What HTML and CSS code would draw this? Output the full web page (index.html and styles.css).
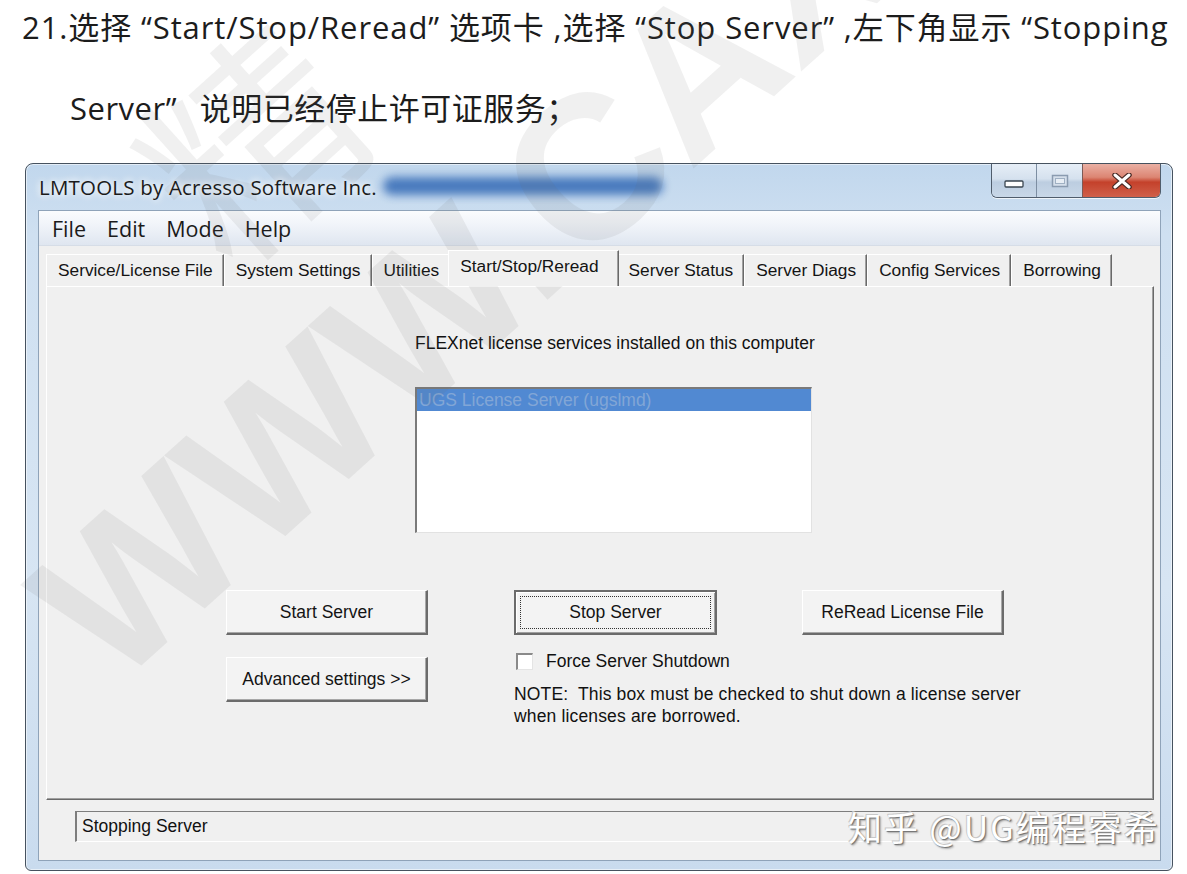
FILE: index.html
```html
<!DOCTYPE html>
<html lang="zh-CN">
<head>
<meta charset="utf-8">
<title>LMTOOLS</title>
<link rel="stylesheet" href="styles.css">
</head>
<body>
<div class="caption">
  <p class="line l1">21.选择 “Start/Stop/Reread” 选项卡 ,选择 “Stop Server” ,左下角显示 “Stopping</p>
  <p class="line l2">Server<span class="fwq">”</span>说明已经停止许可证服务；</p>
</div>

<div class="window">
  <div class="titlebar">
    <span class="title">LMTOOLS by Acresso Software Inc.</span>
    <span class="glass"></span>
    <div class="controls">
      <span class="ctl min">
        <svg width="20" height="8" viewBox="0 0 20 8"><rect x="1" y="1" width="18" height="6" rx="1" fill="#fff" stroke="#3a4550" stroke-width="1.3"/></svg>
      </span>
      <span class="ctl max">
        <svg width="18" height="14" viewBox="0 0 18 14"><rect x="1.5" y="1.5" width="15" height="11" fill="#d5dfeb" stroke="#8a9bb0" stroke-width="1.5"/><rect x="4.5" y="4.5" width="9" height="5" fill="#e8eef5" stroke="#9fb0c3" stroke-width="1"/></svg>
      </span>
      <span class="ctl close">
        <svg width="22" height="16" viewBox="0 0 22 16"><path d="M4 2 L18 14 M18 2 L4 14" stroke="#4a2a25" stroke-width="5.5" stroke-linecap="round"/><path d="M4 2 L18 14 M18 2 L4 14" stroke="#fff" stroke-width="3" stroke-linecap="round"/></svg>
      </span>
    </div>
  </div>

  <div class="client">
    <div class="menubar">
      <span class="menu">File</span>
      <span class="menu">Edit</span>
      <span class="menu">Mode</span>
      <span class="menu">Help</span>
    </div>

    <div class="tabs">
      <span class="tab">Service/License File</span>
      <span class="tab">System Settings</span>
      <span class="tab">Utilities</span>
      <span class="tab active">Start/Stop/Reread</span>
      <span class="tab">Server Status</span>
      <span class="tab">Server Diags</span>
      <span class="tab">Config Services</span>
      <span class="tab">Borrowing</span>
    </div>

    <div class="panel">
      <div class="services">
        <div class="heading">FLEXnet license services installed on this computer</div>
        <div class="listbox">
          <div class="item selected">UGS License Server (ugslmd)</div>
        </div>
      </div>

      <div class="actions">
        <button class="btn start">Start Server</button>
        <button class="btn stop default"><span class="focus">Stop Server</span></button>
        <button class="btn reread">ReRead License File</button>
        <button class="btn advanced">Advanced settings &gt;&gt;</button>
        <div class="stopopts">
          <label class="check"><span class="box"></span>Force Server Shutdown</label>
          <p class="note">NOTE:&nbsp; This box must be checked to shut down a license server<br>when licenses are borrowed.</p>
        </div>
      </div>
    </div>

    <div class="statusbar">
      <div class="statusfield">Stopping Server</div>
    </div>
  </div>
</div>

<div class="wm wm-main">WWW.CAX</div>
<div class="wm wm-char">精</div>
<div class="zhihu">知乎 @UG编程睿希</div>
</body>
</html>
```

FILE: styles.css
```css
html, body {
  margin: 0;
  padding: 0;
}

body {
  width: 1187px;
  height: 874px;
  background: #ffffff;
  position: relative;
  overflow: hidden;
  font-family: "Liberation Sans", Arial, sans-serif;
  color: #111;
}

/* ---------- caption text ---------- */
.caption {
  padding-top: 7px;
  font-family: "Open Sans", "Noto Sans CJK SC", sans-serif;
  font-size: 31px;
  color: #1c1c1c;
}

.line {
  margin: 0;
  line-height: 40px;
  white-space: nowrap;
}

.l1 {
  margin-left: 22px;
  letter-spacing: 0.9px;
}

.l2 {
  margin-top: 41px;
  margin-left: 70px;
  letter-spacing: 0.5px;
}

.fwq {
  display: inline-block;
  width: 34px;
}

/* ---------- window frame ---------- */
.window {
  margin-top: 35px;
  margin-left: 25px;
  width: 1148px;
  height: 708px;
  box-sizing: border-box;
  border: 1px solid #46525f;
  border-radius: 8px 8px 6px 6px;
  background: linear-gradient(180deg, #c1d7ed 0%, #cfe0f1 10%, #d7e5f3 60%, #c9dbee 100%);
  box-shadow: inset 0 0 0 1px rgba(255, 255, 255, 0.55);
  padding: 0 11px 9px 12px;
  display: flex;
  flex-direction: column;
}

.titlebar {
  height: 46px;
  display: flex;
  align-items: flex-start;
  position: relative;
  flex: none;
}

.title {
  font-family: "Open Sans", "Noto Sans", sans-serif;
  font-size: 20.5px;
  line-height: 26px;
  margin-top: 10px;
  margin-left: 1px;
  letter-spacing: 0.2px;
  color: #1b1b1b;
  text-shadow: 0 0 6px #fff, 0 0 10px #fff;
  position: relative;
  z-index: 1;
  white-space: nowrap;
}

.glass {
  position: absolute;
  left: 345px;
  top: 13px;
  width: 280px;
  height: 18px;
  border-radius: 9px;
  background: #3a6fb8;
  filter: blur(5px);
  opacity: 0.9;
}

.controls {
  margin-left: auto;
  display: flex;
  height: 33px;
  border: 1px solid #505d6c;
  border-top: none;
  border-radius: 0 0 6px 6px;
  overflow: hidden;
  box-shadow: 0 1px 0 rgba(255, 255, 255, 0.7);
}

.ctl {
  display: flex;
  align-items: center;
  justify-content: center;
}

.ctl.min {
  width: 45px;
  background: linear-gradient(180deg, #e6eef7 0%, #d5e1ee 45%, #bccde0 55%, #c9d8e8 100%);
  border-right: 1px solid #7d8ea2;
  padding-top: 6px;
  box-sizing: border-box;
}

.ctl.max {
  width: 45px;
  background: linear-gradient(180deg, #e6eef7 0%, #d5e1ee 45%, #bccde0 55%, #c9d8e8 100%);
  border-right: 1px solid #7d5a55;
}

.ctl.close {
  width: 77px;
  background: linear-gradient(180deg, #eab0a4 0%, #dc8573 40%, #c4412b 55%, #d0604a 100%);
}

/* ---------- client area ---------- */
.client {
  flex: 1;
  background: #f0f0f0;
  border: 1px solid #8fa3b9;
  display: flex;
  flex-direction: column;
  min-height: 0;
}

.menubar {
  height: 34px;
  flex: none;
  display: flex;
  align-items: center;
  padding-left: 3px;
  background: linear-gradient(180deg, #fbfcfe 0%, #eef2f8 50%, #dfe6f0 100%);
  border-bottom: 1px solid #d6dde7;
  font-family: "Open Sans", "Noto Sans", sans-serif;
  font-size: 21.5px;
  color: #1b1b1b;
}

.menu {
  padding: 0 11px 0 10px;
}

/* ---------- tabs ---------- */
.tabs {
  flex: none;
  height: 36px;
  padding: 4px 0 0 7px;
  display: flex;
  align-items: flex-end;
  font-size: 17.3px;
}

.tab {
  height: 31px;
  line-height: 31px;
  padding: 0 10px 0 11px;
  border-top: 1px solid #ffffff;
  border-left: 1px solid #ffffff;
  border-right: 1px solid #696969;
  box-shadow: inset -1px 0 0 #a0a0a0;
  white-space: nowrap;
  color: #141414;
}

.tab.active {
  height: 35px;
  line-height: 31px;
  margin: 0 -2px 0 -2px;
  padding: 0 19px 0 11px;
  background: #f0f0f0;
  position: relative;
  z-index: 1;
}

/* ---------- tab panel ---------- */
.panel {
  flex: none;
  height: 514px;
  box-sizing: border-box;
  margin: 0 6px 0 7px;
  border-left: 1px solid #ffffff;
  border-top: 1px solid #ffffff;
  border-right: 1px solid #696969;
  border-bottom: 1px solid #696969;
  box-shadow: inset -1px -1px 0 #a0a0a0;
  font-size: 17.5px;
}

.services {
  margin-left: 368px;
  width: 460px;
}

.heading {
  margin-top: 45px;
  line-height: 22px;
  white-space: nowrap;
}

.listbox {
  margin-top: 33px;
  width: 397px;
  height: 146px;
  box-sizing: border-box;
  background: #ffffff;
  border-top: 2px solid #7a7a7a;
  border-left: 2px solid #7a7a7a;
  border-right: 1px solid #e2e2e2;
  border-bottom: 1px solid #e2e2e2;
}

.item {
  height: 22px;
  line-height: 22px;
  padding-left: 2px;
  white-space: nowrap;
}

.item.selected {
  background: #5189d2;
  color: #82a6d6;
}

/* ---------- buttons ---------- */
.actions {
  margin-top: 57px;
  margin-left: 179px;
  display: grid;
  grid-template-columns: 202px 86px 203px 85px 202px;
  grid-template-rows: 45px auto;
  row-gap: 15px;
}

.btn {
  font-family: "Liberation Sans", Arial, sans-serif;
  font-size: 17.5px;
  color: #141414;
  background: #f3f3f3;
  border-top: 1px solid #ffffff;
  border-left: 1px solid #ffffff;
  border-right: 2px solid #6b6b6b;
  border-bottom: 2px solid #6b6b6b;
  box-shadow: inset -1px -1px 0 #a8a8a8;
  height: 45px;
  padding: 0;
  margin: 0;
}

.start { grid-column: 1; grid-row: 1; }
.stop { grid-column: 3; grid-row: 1; }
.reread { grid-column: 5; grid-row: 1; }
.advanced { grid-column: 1; grid-row: 2; margin-top: 7px; }

.btn.default {
  border: 2px solid #6b6b6b;
  box-shadow: inset 1px 1px 0 #ffffff, inset -1px -1px 0 #a0a0a0;
  padding: 4px;
}

.focus {
  display: flex;
  align-items: center;
  justify-content: center;
  height: 100%;
  box-sizing: border-box;
  border: 1px dotted #333;
}

.stopopts {
  grid-column: 3 / 6;
  grid-row: 2;
  padding-left: 2px;
}

.check {
  display: flex;
  align-items: center;
  height: 22px;
  line-height: 22px;
  white-space: nowrap;
}

.box {
  width: 17px;
  height: 17px;
  box-sizing: border-box;
  background: #ffffff;
  border-top: 2px solid #8a8a8a;
  border-left: 2px solid #8a8a8a;
  border-right: 1px solid #e4e4e4;
  border-bottom: 1px solid #e4e4e4;
  margin-right: 13px;
}

.note {
  margin: 11px 0 0 -2px;
  line-height: 22px;
  white-space: nowrap;
  letter-spacing: 0.15px;
}

/* ---------- status bar ---------- */
.statusbar {
  flex: none;
  padding: 11px 8px 0 36px;
}

.statusfield {
  height: 31px;
  box-sizing: border-box;
  line-height: 29px;
  padding-left: 5px;
  font-size: 17.5px;
  border-top: 1px solid #7d7d7d;
  border-left: 2px solid #7d7d7d;
  border-right: 1px solid #ffffff;
  border-bottom: 1px solid #ffffff;
}

/* ---------- watermarks ---------- */
.wm {
  position: absolute;
  pointer-events: none;
  white-space: nowrap;
  font-family: "Liberation Sans", Arial, sans-serif;
  color: rgba(110, 110, 110, 0.1);
  line-height: 1;
}

.wm-main {
  left: -110px;
  top: 180px;
  width: 1140px;
  text-align: center;
  font-size: 205px;
  font-weight: bold;
  transform: rotate(-42deg);
}

.wm-char {
  left: 140px;
  top: 30px;
  font-family: "Noto Sans CJK SC", sans-serif;
  font-size: 210px;
  transform: rotate(-42deg);
}

.zhihu {
  position: absolute;
  left: 848px;
  top: 804px;
  font-family: "Noto Sans CJK SC", sans-serif;
  font-size: 34px;
  line-height: 46px;
  letter-spacing: 2px;
  color: #ffffff;
  text-shadow: 1px 1px 1px #707070, -1px -1px 0 #c8c8c8, 2px 2px 2px rgba(0,0,0,0.25);
  white-space: nowrap;
}
```
